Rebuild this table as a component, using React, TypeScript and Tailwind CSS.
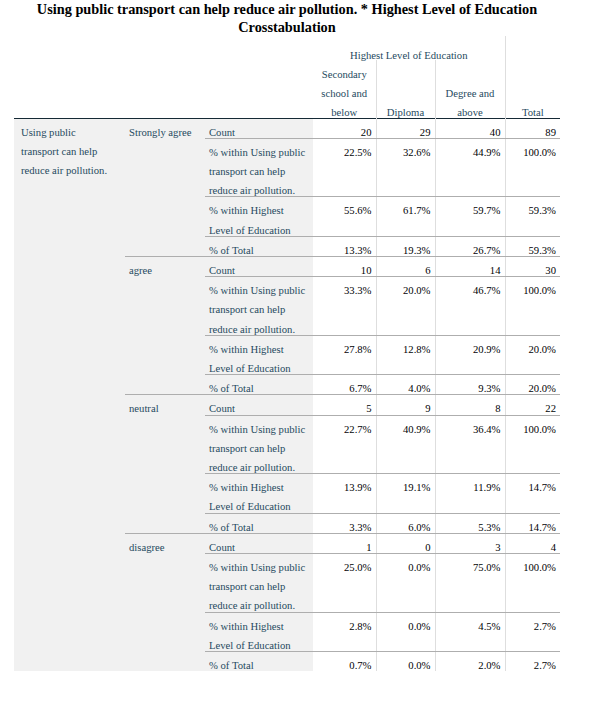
import React from "react";

type Group = { label: string; data: string[][] };

const groups: Group[] = [
  {
    label: "Strongly agree",
    data: [
      ["20", "29", "40", "89"],
      ["22.5%", "32.6%", "44.9%", "100.0%"],
      ["55.6%", "61.7%", "59.7%", "59.3%"],
      ["13.3%", "19.3%", "26.7%", "59.3%"],
    ],
  },
  {
    label: "agree",
    data: [
      ["10", "6", "14", "30"],
      ["33.3%", "20.0%", "46.7%", "100.0%"],
      ["27.8%", "12.8%", "20.9%", "20.0%"],
      ["6.7%", "4.0%", "9.3%", "20.0%"],
    ],
  },
  {
    label: "neutral",
    data: [
      ["5", "9", "8", "22"],
      ["22.7%", "40.9%", "36.4%", "100.0%"],
      ["13.9%", "19.1%", "11.9%", "14.7%"],
      ["3.3%", "6.0%", "5.3%", "14.7%"],
    ],
  },
  {
    label: "disagree",
    data: [
      ["1", "0", "3", "4"],
      ["25.0%", "0.0%", "75.0%", "100.0%"],
      ["2.8%", "0.0%", "4.5%", "2.7%"],
      ["0.7%", "0.0%", "2.0%", "2.7%"],
    ],
  },
];

const statLabels: string[][] = [
  ["Count"],
  ["% within Using public", "transport can help", "reduce air pollution."],
  ["% within Highest", "Level of Education"],
  ["% of Total"],
];

function Lines({ lines }: { lines: string[] }) {
  return (
    <div className="pt-[4px] -mb-[4px] leading-[19.2px] whitespace-nowrap">
      {lines.map((l, i) => (
        <div key={i}>{l}</div>
      ))}
    </div>
  );
}

export default function App() {
  return (
    <div className="bg-white min-h-[702px] w-[616px] text-[#010205] font-['Liberation_Serif','Times_New_Roman',serif]">
      <div className="ml-[14px] w-[546px]">
        <div className="text-center font-bold text-[14.3px] leading-[18px] text-black">
          Using public transport can help reduce air pollution. * Highest Level of Education Crosstabulation
        </div>
        <table className="table-fixed w-[546px] text-[10.67px] font-['Liberation_Serif','Times_New_Roman',serif]">
          <colgroup>
            <col className="w-[111px]" />
            <col className="w-[80px]" />
            <col className="w-[108px]" />
            <col className="w-[63px]" />
            <col className="w-[59px]" />
            <col className="w-[70px]" />
            <col className="w-[55px]" />
          </colgroup>
          <thead className="text-[#264a60]">
            <tr className="h-[24px]">
              <th colSpan={3} />
              <th colSpan={3} className="align-bottom font-normal text-center">
                <div className="leading-[19.2px] pt-[5px] -mb-[5px]">Highest Level of Education</div>
              </th>
              <th className="border-l border-[#dedede]" />
            </tr>
            <tr className="h-[58px] border-b border-[#152935]">
              <th colSpan={3} />
              <th className="align-bottom font-normal text-center">
                <div className="leading-[19.2px] pt-[5px] -mb-[5px]">
                  <div>Secondary</div>
                  <div>school and</div>
                  <div>below</div>
                </div>
              </th>
              <th className="align-bottom font-normal text-center border-l border-[#dedede]">
                <div className="leading-[19.2px] pt-[5px] -mb-[5px]">Diploma</div>
              </th>
              <th className="align-bottom font-normal text-center border-l border-[#dedede]">
                <div className="leading-[19.2px] pt-[5px] -mb-[5px]">
                  <div>Degree and</div>
                  <div>above</div>
                </div>
              </th>
              <th className="align-bottom font-normal text-center border-l border-[#dedede]">
                <div className="leading-[19.2px] pt-[5px] -mb-[5px]">Total</div>
              </th>
            </tr>
          </thead>
          <tbody>
            {groups.map((g, gi) => {
              const lastGroup = gi === groups.length - 1;
              return statLabels.map((sl, si) => {
                const lastRow = lastGroup && si === statLabels.length - 1;
                const rowBorder = lastRow ? "" : "border-b border-[#aeaeae]";
                return (
                  <tr key={`${gi}-${si}`}>
                    {gi === 0 && si === 0 && (
                      <td
                        rowSpan={16}
                        className="align-top bg-[#f1f1f1] text-[#264a60] pl-[7px]"
                      >
                        <Lines lines={["Using public", "transport can help", "reduce air pollution."]} />
                      </td>
                    )}
                    {si === 0 && (
                      <td
                        rowSpan={4}
                        className={`align-top bg-[#f1f1f1] text-[#264a60] pl-[4px] ${
                          lastGroup ? "" : "border-b border-[#aeaeae]"
                        }`}
                      >
                        <Lines lines={[g.label]} />
                      </td>
                    )}
                    <td className={`align-top bg-[#f1f1f1] text-[#264a60] pl-[4px] ${rowBorder}`}>
                      <Lines lines={sl} />
                    </td>
                    {g.data[si].map((v, vi) => (
                      <td
                        key={vi}
                        className={`align-top text-right pr-[4px] ${rowBorder} ${
                          vi > 0 ? "border-l border-l-[#dedede]" : ""
                        }`}
                      >
                        <Lines lines={[v]} />
                      </td>
                    ))}
                  </tr>
                );
              });
            })}
          </tbody>
        </table>
      </div>
    </div>
  );
}
